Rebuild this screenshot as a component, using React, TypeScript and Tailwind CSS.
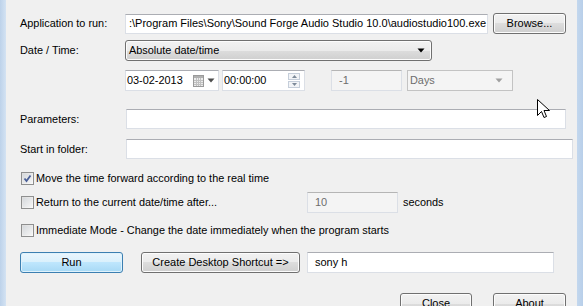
import React from "react";

const font = { fontFamily: '"Liberation Sans", Arial, sans-serif' };

function Btn({ children, className = "", primary = false }: { children: React.ReactNode; className?: string; primary?: boolean }) {
  return (
    <div
      className={`h-[21px] flex items-center justify-center rounded-[3px] border text-[11px] text-black shrink-0 ${
        primary
          ? "border-[#3c7fb1] bg-[linear-gradient(#eaf6fd_0%,#d9f0fc_50%,#bee6fd_50%,#a7d9f5_100%)] shadow-[inset_0_0_0_1px_#dff2fc]"
          : "border-[#707070] bg-[linear-gradient(#f2f2f2_0%,#ebebeb_50%,#dddddd_50%,#cfcfcf_100%)] shadow-[inset_0_0_0_1px_#fcfcfc]"
      } ${className}`}
    >
      {children}
    </div>
  );
}

function TextBox({ value = "", className = "", disabled = false }: { value?: string; className?: string; disabled?: boolean }) {
  return (
    <div
      className={`h-[20px] flex items-center px-[3px] border border-[#dbdfe6] border-t-[#abadb3] text-[11px] shrink-0 whitespace-nowrap overflow-hidden ${
        disabled ? "bg-[#f4f4f4] text-[#6d6d6d] border-[#c9c9c9] border-t-[#b5b5b5]" : "bg-white text-black"
      } ${className}`}
    >
      {value}
    </div>
  );
}

function Check({ checked = false }: { checked?: boolean }) {
  return (
    <div className="w-[13px] h-[13px] border border-[#8e8f8f] bg-[linear-gradient(135deg,#dcdcdc,#fbfbfb)] p-[1px] shrink-0 relative">
      <div className="w-full h-full bg-[linear-gradient(135deg,#d6d9dd,#f4f4f4)]" />
      {checked && (
        <svg viewBox="0 0 11 11" className="absolute left-0 top-0 w-[11px] h-[11px]">
          <path d="M2.5 5.5 L4.5 8 L8.5 2.5" fill="none" stroke="#4a5f97" strokeWidth="1.8" />
        </svg>
      )}
    </div>
  );
}

function Arrow({ color = "#000" }: { color?: string }) {
  return (
    <svg width="8" height="5" viewBox="0 0 8 5">
      <path d="M0.5 0.5 H7.5 L4 4.5 Z" fill={color} />
    </svg>
  );
}

export default function App() {
  return (
    <div className="w-[583px] h-[306px] flex overflow-hidden relative" style={font}>
      <div className="w-[6px] shrink-0 bg-[linear-gradient(90deg,#bdd2ea,#d4e3f3)]" />
      <div className="flex-1 bg-[#f0f0f0] pl-[14px] pt-[13px] flex flex-col text-[10.9px] text-black">
        {/* application */}
        <div className="h-[21px] flex items-center">
          <div className="w-[105px] shrink-0">Application to run:</div>
          <TextBox className="w-[363px]" value=":\Program Files\Sony\Sound Forge Audio Studio 10.0\audiostudio100.exe" />
          <Btn className="w-[73px] ml-[5px]">Browse...</Btn>
        </div>

        {/* date/time */}
        <div className="h-[21px] flex items-center mt-[6px]">
          <div className="w-[105px] shrink-0">Date / Time:</div>
          <div className="w-[307px] h-[21px] rounded-[3px] border border-[#707070] bg-[linear-gradient(#f2f2f2_0%,#ebebeb_50%,#dddddd_50%,#cfcfcf_100%)] shadow-[inset_0_0_0_1px_#fcfcfc] flex items-center pl-[3px] pr-[6px]">
            <span className="flex-1">Absolute date/time</span>
            <Arrow />
          </div>
        </div>

        {/* date time row */}
        <div className="h-[21px] flex items-center mt-[9px] pl-[105px]">
          <div className="w-[94px] h-[21px] bg-white border border-[#dbdfe6] border-t-[#abadb3] flex items-center pl-[1px] pr-[3px]">
            <span className="flex-1">03-02-2013</span>
            <svg width="11" height="12" viewBox="0 0 11 12" className="mr-[3px]">
              <rect x="0.5" y="0.5" width="10" height="11" fill="#ececec" stroke="#9a9a9a" />
              <rect x="1" y="1" width="9" height="2" fill="#b0b0b0" />
              <path d="M1 5.5 H10 M1 7.5 H10 M1 9.5 H10 M3.5 3 V11 M5.5 3 V11 M7.5 3 V11" stroke="#c0c0c0" strokeWidth="1" />
            </svg>
            <Arrow color="#4d4d4d" />
          </div>
          <div className="w-[83px] h-[21px] ml-[3px] bg-white border border-[#dbdfe6] border-t-[#abadb3] flex items-center pl-[1px] pr-[4px]">
            <span className="flex-1">00:00:00</span>
            <div className="w-[12px] h-[15px] flex flex-col gap-[1px]">
              <div className="flex-1 border border-[#c5ceda] bg-[#f2f4f7] flex items-center justify-center">
                <svg width="5" height="3" viewBox="0 0 5 3"><path d="M0 3 L2.5 0 L5 3 Z" fill="#7d8a99" /></svg>
              </div>
              <div className="flex-1 border border-[#c5ceda] bg-[#f2f4f7] flex items-center justify-center">
                <svg width="5" height="3" viewBox="0 0 5 3"><path d="M0 0 L5 0 L2.5 3 Z" fill="#7d8a99" /></svg>
              </div>
            </div>
          </div>
          <TextBox disabled className="w-[71px] h-[21px] ml-[26px] pl-[7px]" value="-1" />
          <div className="w-[106px] h-[21px] ml-[5px] border border-[#c3c3c3] bg-[#f4f4f4] text-[#6d6d6d] flex items-center pl-[2px] pr-[9px]">
            <span className="flex-1">Days</span>
            <Arrow color="#a0a0a0" />
          </div>
        </div>

        {/* parameters */}
        <div className="h-[20px] flex items-center mt-[18px]">
          <div className="w-[106px] shrink-0">Parameters:</div>
          <TextBox className="w-[440px]" />
        </div>
        <div className="h-[20px] flex items-center mt-[10px]">
          <div className="w-[106px] shrink-0">Start in folder:</div>
          <TextBox className="w-[447px]" />
        </div>

        {/* checkboxes */}
        <div className="h-[15px] flex items-center mt-[12px] pl-[1px]">
          <Check checked />
          <span className="ml-[2px]">Move the time forward according to the real time</span>
        </div>
        <div className="h-[21px] flex items-center mt-[6px] pl-[1px]">
          <Check />
          <span className="ml-[2px] w-[271px]">Return to the current date/time after...</span>
          <TextBox disabled className="w-[91px] h-[21px] pl-[7px]" value="10" />
          <span className="ml-[5px]">seconds</span>
        </div>
        <div className="h-[15px] flex items-center mt-[10px] pl-[1px]">
          <Check />
          <span className="ml-[2px]">Immediate Mode - Change the date immediately when the program starts</span>
        </div>

        {/* buttons */}
        <div className="h-[21px] flex items-center mt-[14px]">
          <Btn primary className="w-[103px]">Run</Btn>
          <Btn className="w-[159px] ml-[18px]">Create Desktop Shortcut =&gt;</Btn>
          <TextBox className="w-[247px] h-[21px] ml-[7px] pl-[7px]" value="sony h" />
        </div>
        <div className="h-[21px] flex items-center mt-[20px] pl-[380px]">
          <Btn className="w-[72px]">Close</Btn>
          <Btn className="w-[73px] ml-[21px]">About</Btn>
        </div>
      </div>
      <div className="w-[6px] shrink-0 bg-[linear-gradient(90deg,#c3d7ee,#b8cfe9)]" />

      {/* mouse cursor */}
      <svg className="absolute left-[537px] top-[99px]" width="13" height="20" viewBox="0 0 13 20">
        <path d="M0.5 0.5 V16.5 L4.5 12.5 L7 18.5 L9.5 17.5 L7 11.5 H12.5 Z" fill="#fff" stroke="#000" strokeWidth="1" strokeLinejoin="round" />
      </svg>
    </div>
  );
}
